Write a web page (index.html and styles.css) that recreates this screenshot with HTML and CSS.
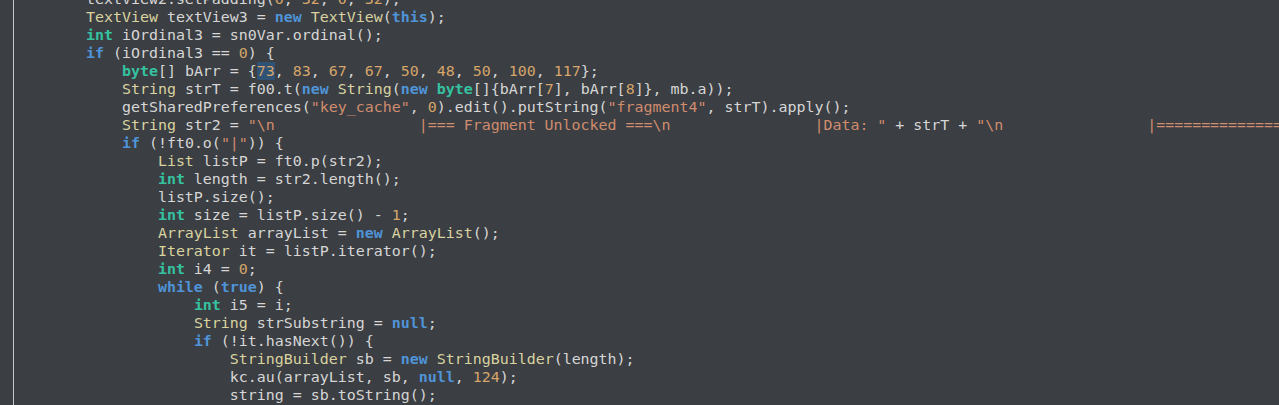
FILE: index.html
```html
<!DOCTYPE html>
<html>
<head>
<meta charset="utf-8">
<link rel="stylesheet" href="styles.css">
</head>
<body>
<div class="editor">
  <div class="gutter"></div>
  <div class="code">
<div class="ln">        textView2.setPadding(<span class="n">0</span>, <span class="n">32</span>, <span class="n">0</span>, <span class="n">32</span>);</div>
<div class="ln">        <span class="c">TextView</span> textView3 = <span class="k">new</span> <span class="c">TextView</span>(<span class="k">this</span>);</div>
<div class="ln">        <span class="t">int</span> iOrdinal3 = sn0Var.ordinal();</div>
<div class="ln">        <span class="k">if</span> (iOrdinal3 == <span class="n">0</span>) {</div>
<div class="ln">            <span class="t">byte</span>[] bArr = {<span class="n sel">73</span>, <span class="n">83</span>, <span class="n">67</span>, <span class="n">67</span>, <span class="n">50</span>, <span class="n">48</span>, <span class="n">50</span>, <span class="n">100</span>, <span class="n">117</span>};</div>
<div class="ln">            <span class="c">String</span> strT = f00.t(<span class="k">new</span> <span class="c">String</span>(<span class="k">new</span> <span class="t">byte</span>[]{bArr[<span class="n">7</span>], bArr[<span class="n">8</span>]}, mb.a));</div>
<div class="ln">            getSharedPreferences(<span class="s">"key_cache"</span>, <span class="n">0</span>).edit().putString(<span class="s">"fragment4"</span>, strT).apply();</div>
<div class="ln">            <span class="c">String</span> str2 = <span class="s">"\n                |=== Fragment Unlocked ===\n                |Data: "</span> + strT + <span class="s">"\n                |==============================================</span></div>
<div class="ln">            <span class="k">if</span> (!ft0.o(<span class="s">"|"</span>)) {</div>
<div class="ln">                <span class="c">List</span> listP = ft0.p(str2);</div>
<div class="ln">                <span class="t">int</span> length = str2.length();</div>
<div class="ln">                listP.size();</div>
<div class="ln">                <span class="t">int</span> size = listP.size() - <span class="n">1</span>;</div>
<div class="ln">                <span class="c">ArrayList</span> arrayList = <span class="k">new</span> <span class="c">ArrayList</span>();</div>
<div class="ln">                <span class="c">Iterator</span> it = listP.iterator();</div>
<div class="ln">                <span class="t">int</span> i4 = <span class="n">0</span>;</div>
<div class="ln">                <span class="k">while</span> (<span class="k">true</span>) {</div>
<div class="ln">                    <span class="t">int</span> i5 = i;</div>
<div class="ln">                    <span class="c">String</span> strSubstring = <span class="k">null</span>;</div>
<div class="ln">                    <span class="k">if</span> (!it.hasNext()) {</div>
<div class="ln">                        <span class="c">StringBuilder</span> sb = <span class="k">new</span> <span class="c">StringBuilder</span>(length);</div>
<div class="ln">                        kc.au(arrayList, sb, <span class="k">null</span>, <span class="n">124</span>);</div>
<div class="ln">                        string = sb.toString();</div>
  </div>
</div>
</body>
</html>
```
FILE: styles.css
```css
html, body {
  margin: 0;
  padding: 0;
  background: #3b3e42;
  overflow: hidden;
}
.editor {
  display: flex;
  height: 405px;
  overflow: hidden;
  background: #3b3e42;
}
.gutter {
  width: 13px;
  flex: 0 0 13px;
  border-right: 1px solid #c4c4c4;
  background: #3b3e42;
}
.code {
  flex: 1;
  margin-top: -10px;
  font-family: "DejaVu Sans Mono", monospace;
  font-size: 14.95px;
  line-height: 18px;
  color: #d6d6d6;
  overflow: hidden;
}
.ln {
  height: 18px;
  white-space: pre;
}
.k { color: #4f94d8; font-weight: bold; }
.t { color: #35c2a0; font-weight: bold; }
.c { color: #d9d3a0; }
.n { color: #d6a56b; }
.s { color: #d08c6e; }
.sel { background: #2f5275; }
```
